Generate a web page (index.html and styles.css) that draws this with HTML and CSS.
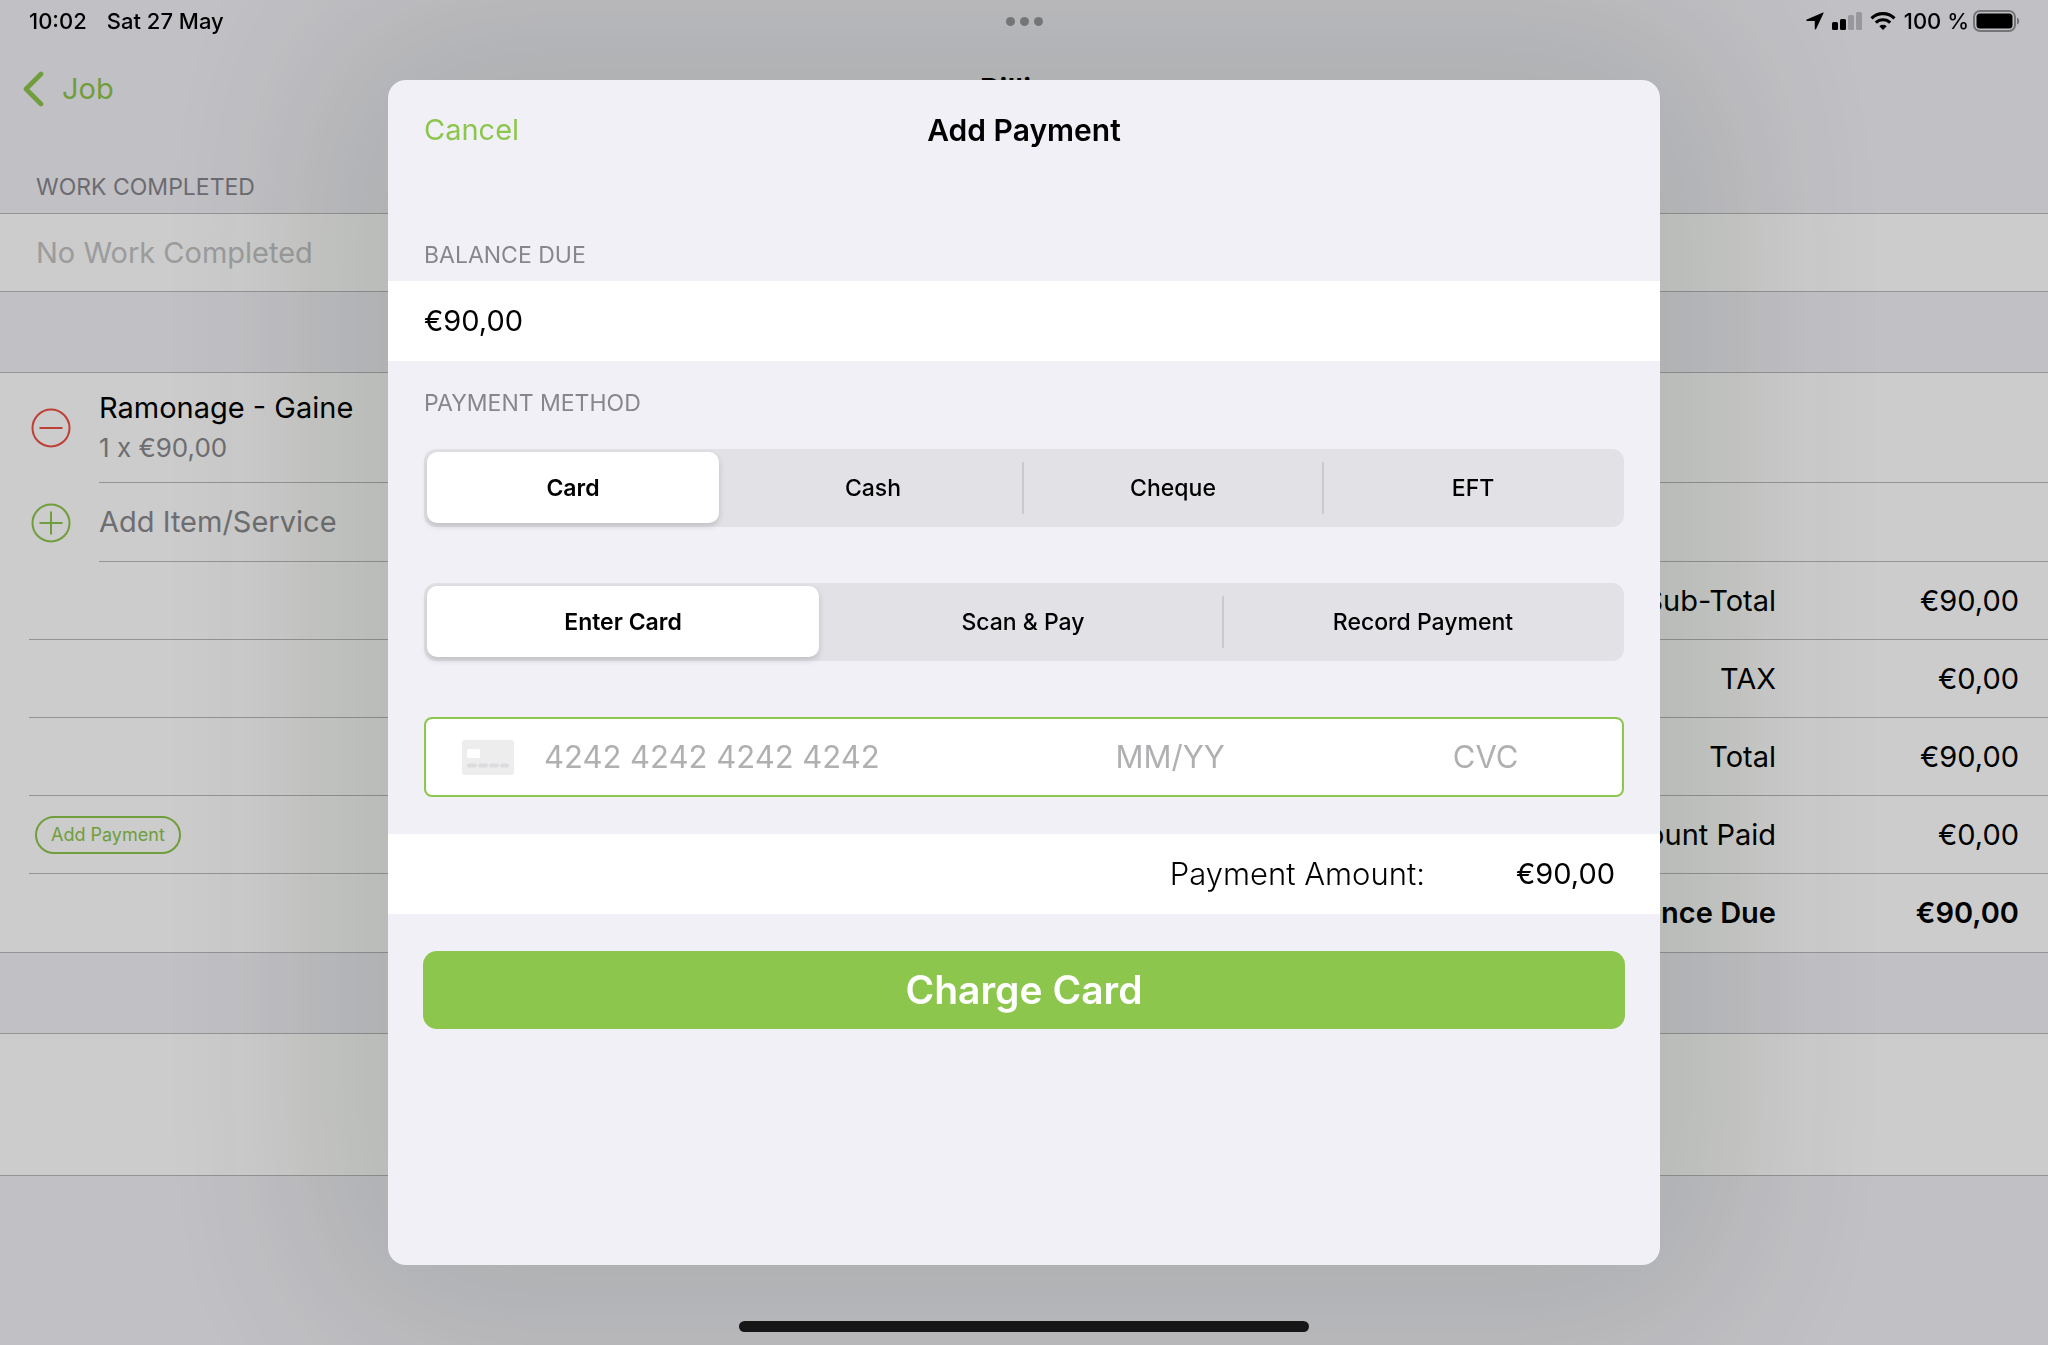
FILE: index.html
```html
<!DOCTYPE html>
<html lang="en">
<head>
  <meta charset="UTF-8">
  <title>Add Payment</title>
  <link rel="stylesheet" href="styles.css">
</head>
<body>

<div class="page">
  <header class="navbar">
    <a class="back" href="#">
      <svg width="22" height="36" viewBox="0 0 22 36"><path d="M18 3L3 18l15 15" fill="none" stroke="currentColor" stroke-width="4.600" stroke-linecap="round" stroke-linejoin="round"/></svg>
      Job
    </a>
    <h1>Billing</h1>
  </header>

  <h2 class="section-title">Work Completed</h2>
  <div class="group">
    <p class="empty">No Work Completed</p>
  </div>

  <div class="group items">
    <div class="item item-tall">
      <button class="round remove" aria-label="Remove item">
        <svg width="40" height="40" viewBox="0 0 40 40"><circle cx="20" cy="20" r="18.5"/><path d="M8.500 20h23"/></svg>
      </button>
      <div class="item-text">
        <span>Ramonage - Gaine</span>
        <span class="item-sub">1 x €90,00</span>
      </div>
    </div>
    <div class="item">
      <button class="round add" aria-label="Add item">
        <svg width="40" height="40" viewBox="0 0 40 40"><circle cx="20" cy="20" r="18.5"/><path d="M8.500 20h23M20 8.500v23"/></svg>
      </button>
      <div class="item-text muted">Add Item/Service</div>
    </div>
    <table class="totals">
      <tr><td></td><th>Sub-Total</th><td>€90,00</td></tr>
      <tr><td></td><th>TAX</th><td>€0,00</td></tr>
      <tr><td></td><th>Total</th><td>€90,00</td></tr>
      <tr><td><button class="pill">Add Payment</button></td><th>Amount Paid</th><td>€0,00</td></tr>
      <tr class="due"><td></td><th>Balance Due</th><td>€90,00</td></tr>
    </table>
  </div>

  <div class="group notes"></div>
</div>

<div class="overlay">
  <form class="modal">
    <header class="modal-header">
      <button type="button" class="cancel">Cancel</button>
      <h2>Add Payment</h2>
    </header>

    <h3 class="section-title">Balance Due</h3>
    <p class="balance">€90,00</p>

    <h3 class="section-title">Payment Method</h3>
    <div class="segments">
      <label><input type="radio" name="method" checked><span>Card</span></label>
      <label><input type="radio" name="method"><span>Cash</span></label>
      <label><input type="radio" name="method"><span>Cheque</span></label>
      <label><input type="radio" name="method"><span>EFT</span></label>
    </div>
    <div class="segments">
      <label><input type="radio" name="entry" checked><span>Enter Card</span></label>
      <label><input type="radio" name="entry"><span>Scan &amp; Pay</span></label>
      <label><input type="radio" name="entry"><span>Record Payment</span></label>
    </div>

    <div class="card-field">
      <svg width="52" height="35" viewBox="0 0 52 35">
        <rect width="52" height="35" rx="3" fill="#ededee"/>
        <rect x="5" y="9" width="13" height="9" rx="1.500" fill="#fff"/>
        <path d="M7 25.500h6M18 25.500h6M29 25.500h6M40 25.500h5" stroke="#dcdcdf" stroke-width="4" stroke-linecap="round"/>
      </svg>
      <input class="number" type="text" placeholder="4242 4242 4242 4242" aria-label="Card number">
      <input class="expiry" type="text" placeholder="MM/YY" aria-label="Expiry date">
      <input class="cvc" type="text" placeholder="CVC" aria-label="CVC">
    </div>

    <div class="amount">
      <label for="amount">Payment Amount:</label>
      <input id="amount" type="text" value="€90,00">
    </div>

    <button type="button" class="charge">Charge Card</button>
  </form>
</div>

<div class="statusbar">
  <div class="clock"><span>10:02</span><span>Sat 27 May</span></div>
  <div class="dots"><i></i><i></i><i></i></div>
  <div class="indicators">
    <svg width="18" height="18" viewBox="0 0 18 18"><path d="M17 .500L.800 7.600c-.700.300-.600 1.300.200 1.300l7.700.100.100 7.900c0 .800 1 .900 1.300.200L17.600 1.100c.200-.500-.100-.800-.600-.600z"/></svg>
    <svg width="30" height="18" viewBox="0 0 30 18"><rect y="10" width="6" height="8" rx="1.500"/><rect x="8" y="7" width="6" height="11" rx="1.500"/><rect x="16" y="3" width="6" height="15" rx="1.500" opacity=".22"/><rect x="24" width="6" height="18" rx="1.500" opacity=".22"/></svg>
    <svg width="26" height="18" viewBox="0 0 26 18"><path d="M1.500 6.300a16.500 16.500 0 0 1 23 0M5.800 10.700a10.300 10.300 0 0 1 14.400 0" fill="none" stroke="#000" stroke-width="3.200"/><path d="M9.300 14.200a5.400 5.400 0 0 1 7.400 0L13 18z"/></svg>
    <span>100 %</span>
    <svg class="battery" width="47" height="22" viewBox="0 0 47 22"><rect x="1" y="1" width="41" height="20" rx="6" fill="none" stroke="#000" stroke-opacity=".4" stroke-width="2"/><rect x="3.500" y="3.500" width="36" height="15" rx="3.500"/><path d="M44 7.500c3 1 3 6 0 7z" opacity=".4"/></svg>
  </div>
</div>
<div class="home-bar"></div>

</body>
</html>
```

FILE: styles.css
```css
* { box-sizing: border-box; }
body {
  margin: 0;
  min-height: 100vh;
  background: #f2f1f7;
  color: #000;
  font-family: Inter, "Liberation Sans", sans-serif;
  font-size: 29px;
  line-height: 40px;
  overflow: hidden;
}
h1, h2, h3, p { margin: 0; }
h1, h2 { font-size: 30px; }
p { font-size: 29px; }
button, input { font: inherit; color: inherit; }
button { background: none; border: 0; padding: 0; }

/* page behind the modal */
.navbar {
  display: grid;
  grid-template-columns: 1fr auto 1fr;
  align-items: center;
  height: 96px;
  margin-top: 41px;
  padding: 0 23px;
}
.navbar h1 { font-weight: 600; }
.back {
  display: flex;
  align-items: center;
  gap: 17px;
  color: #8dc64c;
  text-decoration: none;
}
.section-title {
  padding: 0 36px;
  font-size: 23px;
  line-height: 32px;
  font-weight: 400;
  text-transform: uppercase;
  color: #87868c;
}
.page .section-title { margin-top: 34px; }
.group {
  background: #fff;
  border-top: 1px solid #b9b9bb;
  border-bottom: 1px solid #b9b9bb;
}
.page .group { margin-bottom: 80px; }
.page .section-title + .group { margin-top: 10px; }
.empty {
  padding: 19px 36px 18px;
  color: #c3c3c4;
}
.item {
  display: flex;
  align-items: stretch;
  gap: 28px;
  padding-left: 31px;
}
.item-text {
  flex: 1;
  display: flex;
  flex-direction: column;
  justify-content: center;
  height: 79px;
  border-bottom: 1px solid #b9b9bb;
}
.item-tall .item-text { height: 110px; }
.item-sub { font-size: 26px; color: #8a8a8e; }
.muted { color: #8a8a8e; }
.round { display: flex; align-items: center; }
.round svg { fill: none; stroke: currentColor; stroke-width: 2; }
.remove { color: #ee4f44; }
.add { color: #8dc64c; }

.totals {
  width: calc(100% - 29px);
  margin-left: 29px;
  border-spacing: 0;
}
.totals tr { height: 78px; }
.totals th, .totals td {
  height: 78px;
  padding: 0;
  border-bottom: 1px solid #b9b9bb;
  font-weight: 400;
  text-align: right;
}
.totals td:first-child { text-align: left; padding-left: 6px; }
.totals td:last-child { width: 272px; padding-right: 29px; }
.totals .due th, .totals .due td { border-bottom: 0; font-weight: 600; }
.pill {
  display: block;
  padding: 0 14px;
  border: 2px solid #8dc64c;
  border-radius: 19px;
  font-size: 18px;
  line-height: 34px;
  color: #8dc64c;
}
.notes { height: 143px; }

/* modal */
.overlay {
  position: fixed;
  inset: 0;
  display: flex;
  justify-content: center;
  padding: 80px 24px;
  background: rgba(0,0,0,0.2);
}
.modal {
  width: 100%;
  max-width: 1272px;
  background: #f1f0f6;
  border-radius: 18px;
  box-shadow: 0 0 200px 60px rgba(20,40,15,0.14);
}
.modal-header {
  display: grid;
  grid-template-columns: 1fr auto 1fr;
  align-items: center;
  height: 100px;
  padding: 0 36px;
}
.modal-header h2 { font-weight: 600; }
.cancel { justify-self: start; color: #8dc64c; }
.modal-header + .section-title { margin-top: 59px; }
.balance {
  margin: 10px 0 26px;
  padding: 20px 36px;
  background: #fff;
}
.segments {
  display: grid;
  grid-auto-flow: column;
  grid-auto-columns: 1fr;
  height: 78px;
  margin: 30px 36px 56px;
  border-radius: 12px;
  background: #e2e1e6;
  font-size: 23px;
  font-weight: 500;
}
.segments label { display: flex; padding: 3px 5px 4px 3px; }
.segments label:not(:first-child):not(:last-child) {
  background: linear-gradient(#cacace, #cacace) right center / 2px 52px no-repeat;
}
.segments input { position: absolute; opacity: 0; }
.segments span {
  flex: 1;
  display: flex;
  align-items: center;
  justify-content: center;
  border-radius: 10px;
}
.segments input:checked + span {
  background: #fff;
  font-weight: 600;
  box-shadow: 0 3px 6px rgba(0,0,0,0.16);
}
.card-field {
  display: flex;
  align-items: center;
  height: 80px;
  margin: 0 36px 37px;
  padding-left: 36px;
  background: #fff;
  border: 2px solid #8dc64c;
  border-radius: 8px;
}
.card-field input {
  min-width: 0;
  border: 0;
  padding: 0;
  background: none;
  font-size: 31px;
}
.card-field ::placeholder { color: #b0b0b2; opacity: 1; }
.card-field .number { flex: 571; margin-left: 30px; }
.card-field .expiry { flex: 337; }
.card-field .cvc { flex: 169; }
.amount {
  display: flex;
  align-items: center;
  justify-content: flex-end;
  gap: 32px;
  height: 80px;
  padding-right: 45px;
  background: #fff;
}
.amount label { font-size: 31px; font-weight: 300; }
.amount input {
  width: 158px;
  border: 0;
  padding: 0;
  text-align: right;
}
.charge {
  display: block;
  width: calc(100% - 70px);
  height: 78px;
  margin: 37px auto 0;
  border-radius: 14px;
  background: #8dc64c;
  color: #fff;
  font-size: 39px;
  font-weight: 600;
}

/* system bars */
.statusbar {
  position: fixed;
  top: 0;
  left: 0;
  right: 0;
  display: grid;
  grid-template-columns: 1fr auto 1fr;
  align-items: center;
  height: 42px;
  padding: 0 28px 0 29px;
  font-size: 22px;
  font-weight: 500;
}
.clock, .indicators { display: flex; align-items: center; }
.clock { gap: 20px; }
.indicators { justify-content: flex-end; gap: 8px; }
.battery { margin-left: -4px; }
.dots { display: flex; gap: 5px; }
.dots i {
  width: 9px;
  height: 9px;
  border-radius: 50%;
  background: #747576;
}
.home-bar {
  position: fixed;
  left: 50%;
  bottom: 13px;
  width: 570px;
  height: 11px;
  margin-left: -285px;
  border-radius: 6px;
  background: #161616;
}
```
